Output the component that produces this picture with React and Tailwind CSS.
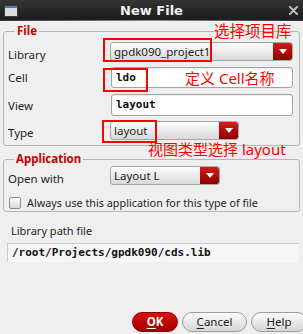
function TitleBar() {
  return (
    <div className="relative flex h-[21px] items-center justify-center bg-gradient-to-b from-[#353535] to-[#1b1b1b]">
      <div className="absolute left-[4px] top-[5px] h-[12px] w-[14px] border border-[#3a3a3a] bg-[#dcdedc]">
        <div className="h-[2px] bg-[#4f78c4]" />
      </div>
      <span className="font-['DejaVu_Sans',sans-serif] text-[13px] font-bold leading-[16px] text-[#f2f2f2]">
        New File
      </span>
      <svg className="absolute right-[5px] top-[6px]" width="9" height="9" viewBox="0 0 9 9">
        <path d="M1 1 L8 8 M8 1 L1 8" stroke="#bdbdbd" strokeWidth="2" strokeLinecap="round" />
      </svg>
      <div className="absolute bottom-0 left-0 h-[1px] w-full bg-gradient-to-r from-[#2d3644] via-[#7f93ad] to-[#2d3644]" />
    </div>
  )
}

function Combo({ text, className }) {
  return (
    <div
      className={`flex h-[19px] overflow-hidden rounded-[3px] border border-[#a6a6a6] bg-gradient-to-b from-[#fdfdfd] to-[#d9d9d9] ${className}`}
    >
      <div className="flex-1 truncate pl-[3px] text-[11.5px] leading-[17px] text-[#1e1e1e]">{text}</div>
      <div className="flex w-[19px] items-center justify-center rounded-r-[2px] bg-gradient-to-b from-[#d91a1a] to-[#8e0000]">
        <svg width="8" height="5" viewBox="0 0 8 5">
          <polygon points="0,0 8,0 4,5" fill="#ffffff" />
        </svg>
      </div>
    </div>
  )
}

function Field({ text, className }) {
  return (
    <div
      className={`w-[182px] rounded-[3px] border border-[#a3a3a3] bg-white pl-[4px] font-['DejaVu_Sans_Mono',monospace] text-[11px] font-bold text-[#111] shadow-[inset_0_1px_1px_rgba(0,0,0,0.08)] ${className}`}
    >
      {text}
    </div>
  )
}

function PillButton({ children, primary, className }) {
  return (
    <div
      className={`flex h-[20px] items-center justify-center rounded-full border text-[11.5px] ${
        primary
          ? 'border-[#8a0000] bg-gradient-to-b from-[#dc1010] to-[#a30000] font-bold text-white'
          : 'border-[#9c9c9c] bg-gradient-to-b from-[#fbfbfb] to-[#d6d6d6] text-[#222]'
      } ${className}`}
    >
      {children}
    </div>
  )
}

export default function App() {
  return (
    <div className="relative h-[334px] w-[303px] overflow-hidden bg-[#efefef] font-['Noto_Sans',sans-serif] text-[11px] text-[#1e1e1e]">
      <TitleBar />

      <div className="px-[3px]">
        <fieldset className="mt-[3px] w-[297px] rounded-[3px] border border-[#b6b6b6] pl-[4px]">
          <legend className="ml-[7px] px-[2px] text-[11.5px] font-bold leading-[14px] text-[#c80000]">File</legend>

          <div className="flex h-[25px] items-start">
            <div className="mt-[10px] w-[102px] text-[11.5px] leading-[14px]">Library</div>
            <Combo text="gpdk090_project1" className="mt-[4px] w-[183px]" />
          </div>
          <div className="flex h-[27px] items-start">
            <div className="mt-[8px] w-[103px] text-[11.5px] leading-[14px]">Cell</div>
            <Field text="ldo" className="mt-[4px] h-[21px] leading-[19px]" />
          </div>
          <div className="flex h-[27px] items-start">
            <div className="mt-[9px] w-[103px] text-[11.5px] leading-[14px]">View</div>
            <Field text="layout" className="mt-[4px] h-[22px] leading-[20px]" />
          </div>
          <div className="flex h-[28px] items-start">
            <div className="mt-[9px] w-[102px] text-[11.5px] leading-[14px]">Type</div>
            <Combo text="layout" className="mt-[4px] w-[129px]" />
          </div>
        </fieldset>

        <fieldset className="mt-[6px] w-[297px] rounded-[3px] border border-[#b6b6b6] pl-[4px]">
          <legend className="ml-[6px] px-[2px] text-[11.5px] font-bold leading-[14px] text-[#c80000]">
            Application
          </legend>
          <div className="flex h-[26px] items-start">
            <div className="mt-[6px] w-[102px] text-[11.5px] leading-[14px]">Open with</div>
            <Combo text="Layout L" className="w-[110px]" />
          </div>
          <div className="flex h-[19px] items-start">
            <div className="ml-[1px] mt-[5px] h-[12px] w-[12px] rounded-[2px] border border-[#8a8a8a] bg-gradient-to-b from-white to-[#d8d8d8]" />
            <div className="ml-[6px] mt-[4px] text-[10.8px] leading-[14px]">
              Always use this application for this type of file
            </div>
          </div>
        </fieldset>

        <div className="ml-[8px] mt-[12px] leading-[14px]">Library path file</div>
        <div className="ml-[4px] mt-[5px] h-[19px] w-[291px] border-l border-t border-[#c9c9c9] bg-[#f6f6f6] pl-[4px] font-['DejaVu_Sans_Mono',monospace] text-[11px] font-bold leading-[18px] text-[#111]">
          /root/Projects/gpdk090/cds.lib
        </div>

        <div className="ml-[129px] mt-[50px] flex w-[200px] gap-[4px]">
          <PillButton primary className="w-[46px] shrink-0">
            <span className="underline underline-offset-2">O</span>K
          </PillButton>
          <PillButton className="w-[65px] shrink-0">
            <span className="underline underline-offset-2">C</span>ancel
          </PillButton>
          <PillButton className="w-[56px] shrink-0">
            <span className="underline underline-offset-2">H</span>elp
          </PillButton>
        </div>
      </div>

      {/* red annotations */}
      <div className="absolute left-[103px] top-[38px] h-[24px] w-[109px] border-2 border-[#ff0000]" />
      <div className="absolute left-[103px] top-[68px] h-[24px] w-[45px] border-2 border-[#ff0000]" />
      <div className="absolute left-[102px] top-[120px] h-[23px] w-[55px] border-2 border-[#ff0000]" />
      <div className="absolute left-[214px] top-[22px] font-['Noto_Sans','Noto_Sans_CJK_SC',sans-serif] text-[15.5px] leading-[18px] text-[#ff0000]">
        选择项目库
      </div>
      <div className="absolute left-[185px] top-[69px] font-['Noto_Sans','Noto_Sans_CJK_SC',sans-serif] text-[15px] leading-[18px] text-[#ff0000]">
        定义 Cell名称
      </div>
      <div className="absolute left-[148px] top-[140px] font-['Noto_Sans','Noto_Sans_CJK_SC',sans-serif] text-[15px] leading-[18px] text-[#ff0000]">
        视图类型选择 layout
      </div>
    </div>
  )
}
